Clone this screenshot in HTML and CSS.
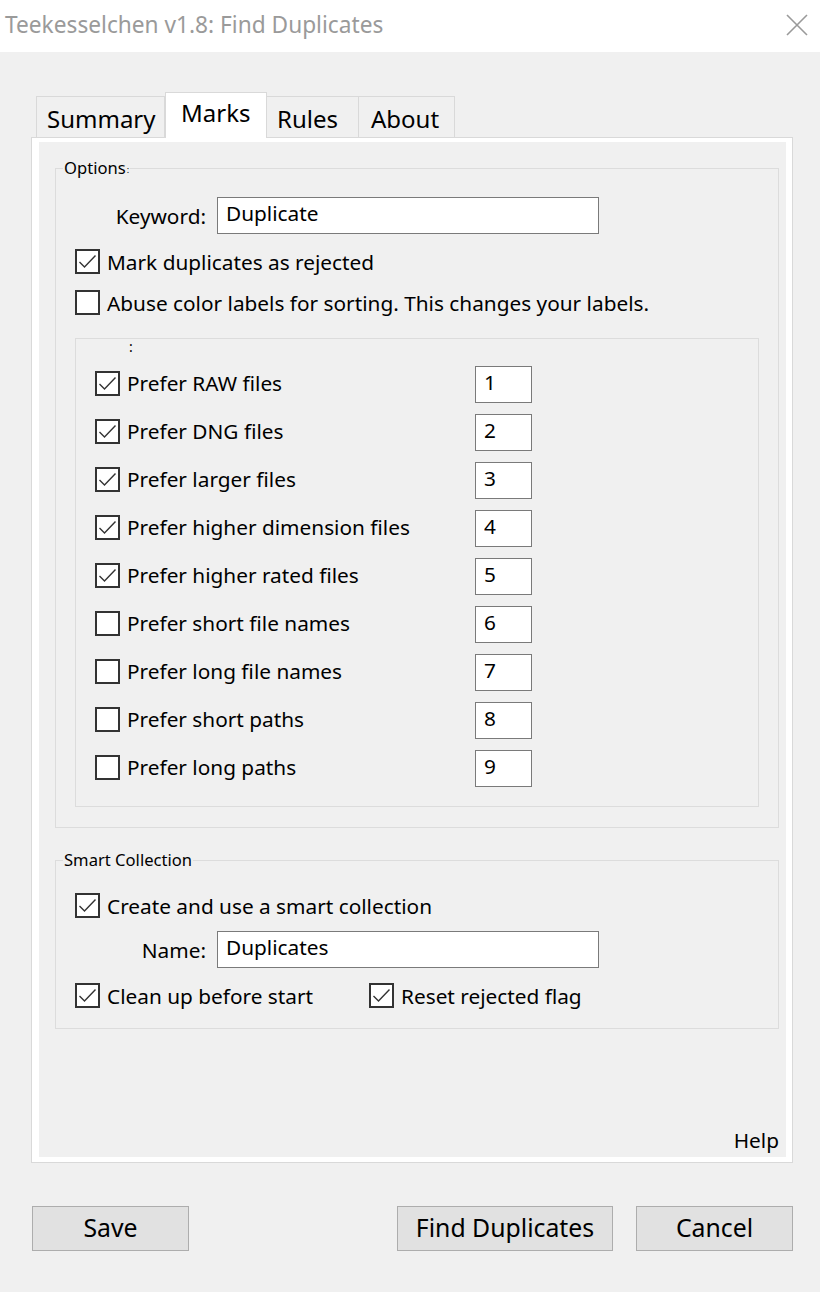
FILE: index.html
```html
<!DOCTYPE html>
<html lang="en">
<head>
    <meta charset="UTF-8">
    <meta name="viewport" content="width=device-width, initial-scale=1.0">
    <title>Teekesselchen v1.8: Find Duplicates</title>
    <link rel="stylesheet" href="styles.css">
</head>
<body>
    <div class="titlebar">
        <span class="title">Teekesselchen v1.8: Find Duplicates</span>
        <svg class="close" width="22" height="22" viewBox="0 0 22 22">
            <path d="M1 1 L21 21 M21 1 L1 21" stroke="#9a9a9a" stroke-width="1.6" fill="none"/>
        </svg>
    </div>

    <div class="client">
        <div class="tabs">
            <div class="tab tab-summary">Summary</div>
            <div class="tab tab-marks active">Marks</div>
            <div class="tab tab-rules">Rules</div>
            <div class="tab tab-about">About</div>
        </div>

        <div class="panel">
            <div class="page">
                <div class="group options">
                    <span class="group-title">Options<span class="dots">:</span></span>

                    <div class="field-row">
                        <label class="field-label">Keyword:</label>
                        <input class="text-input" type="text" value="Duplicate">
                    </div>
                    <div class="check-row first">
                        <span class="check on"></span>
                        <span>Mark duplicates as rejected</span>
                    </div>
                    <div class="check-row">
                        <span class="check"></span>
                        <span>Abuse color labels for sorting. This changes your labels.</span>
                    </div>

                    <div class="group rules">
                        <span class="group-title small">:</span>
                        <div class="rule-row">
                            <div class="rule-check"><span class="check on"></span><span>Prefer RAW files</span></div>
                            <input class="num-input" type="text" value="1">
                        </div>
                        <div class="rule-row">
                            <div class="rule-check"><span class="check on"></span><span>Prefer DNG files</span></div>
                            <input class="num-input" type="text" value="2">
                        </div>
                        <div class="rule-row">
                            <div class="rule-check"><span class="check on"></span><span>Prefer larger files</span></div>
                            <input class="num-input" type="text" value="3">
                        </div>
                        <div class="rule-row">
                            <div class="rule-check"><span class="check on"></span><span>Prefer higher dimension files</span></div>
                            <input class="num-input" type="text" value="4">
                        </div>
                        <div class="rule-row">
                            <div class="rule-check"><span class="check on"></span><span>Prefer higher rated files</span></div>
                            <input class="num-input" type="text" value="5">
                        </div>
                        <div class="rule-row">
                            <div class="rule-check"><span class="check"></span><span>Prefer short file names</span></div>
                            <input class="num-input" type="text" value="6">
                        </div>
                        <div class="rule-row">
                            <div class="rule-check"><span class="check"></span><span>Prefer long file names</span></div>
                            <input class="num-input" type="text" value="7">
                        </div>
                        <div class="rule-row">
                            <div class="rule-check"><span class="check"></span><span>Prefer short paths</span></div>
                            <input class="num-input" type="text" value="8">
                        </div>
                        <div class="rule-row">
                            <div class="rule-check"><span class="check"></span><span>Prefer long paths</span></div>
                            <input class="num-input" type="text" value="9">
                        </div>
                    </div>
                </div>

                <div class="group collection">
                    <span class="group-title">Smart Collection</span>
                    <div class="check-row">
                        <span class="check on"></span>
                        <span>Create and use a smart collection</span>
                    </div>
                    <div class="field-row name-row">
                        <label class="field-label">Name:</label>
                        <input class="text-input" type="text" value="Duplicates">
                    </div>
                    <div class="check-row pair">
                        <div class="pair-left"><span class="check on"></span><span>Clean up before start</span></div>
                        <div><span class="check on"></span><span>Reset rejected flag</span></div>
                    </div>
                </div>

                <div class="help">Help</div>
            </div>
        </div>

        <div class="buttons">
            <button class="btn btn-save">Save</button>
            <button class="btn btn-find">Find Duplicates</button>
            <button class="btn btn-cancel">Cancel</button>
        </div>
    </div>
</body>
</html>
```

FILE: styles.css
```css
body {
    margin: 0;
    font-family: "Noto Sans", "Open Sans", sans-serif;
    color: #000;
    background-color: #f0f0f0;
}
.titlebar {
    height: 52px;
    background-color: #fff;
    display: flex;
    align-items: center;
    justify-content: space-between;
    padding: 0 12px 4px 5px;
    box-sizing: border-box;
}
.title {
    font-size: 22.7px;
    color: #9a9a9a;
}
.close {
    margin-top: 2px;
}
.client {
    padding-top: 40px;
    height: 1240px;
    box-sizing: border-box;
}

/* tabs */
.tabs {
    display: flex;
    align-items: flex-end;
    margin-left: 36px;
    height: 46px;
}
.tab {
    height: 42px;
    box-sizing: border-box;
    border: 1px solid #d9d9d9;
    border-bottom: none;
    font-size: 24px;
    display: flex;
    align-items: center;
    padding: 2px 0 0 10px;
}
.tab + .tab {
    border-left: none;
}
.tab-summary { width: 129px; }
.tab-marks { width: 102px; padding-left: 15px; }
.tab-rules { width: 92px; }
.tab-about { width: 96px; padding-left: 12px; }
.tab.active {
    height: 46px;
    background-color: #fff;
    border-left: 1px solid #d9d9d9;
    position: relative;
    z-index: 1;
    padding-top: 0;
    padding-bottom: 6px;
}
.tab.active + .tab {
    border-left: none;
}

/* tab panel */
.panel {
    margin: -1px 0 0 31px;
    width: 762px;
    height: 1026px;
    box-sizing: border-box;
    border: 1px solid #d9d9d9;
    background-color: #fff;
    padding: 4px 6px 5px 7px;
}
.page {
    height: 100%;
    background-color: #f0f0f0;
    display: flex;
    flex-direction: column;
    padding: 26px 7px 0 16px;
    box-sizing: border-box;
    font-size: 20.8px;
}

/* group boxes */
.group {
    position: relative;
    border: 1px solid #dcdcdc;
}
.group-title {
    position: absolute;
    top: -12px;
    left: 7px;
    padding: 0 1px;
    font-size: 16.6px;
    line-height: 22px;
    background-color: #f0f0f0;
}
.group-title .dots {
    font-size: 9px;
    vertical-align: middle;
    margin-left: 1px;
}
.group-title.small {
    left: 52px;
    top: 1px;
    font-size: 14px;
    line-height: 14px;
    background: none;
}
.options {
    padding: 28px 19px 20px 19px;
}
.collection {
    margin-top: 32px;
    padding: 24px 19px 12px 19px;
}

.field-row {
    display: flex;
    align-items: center;
    height: 37px;
}
.field-label {
    width: 131px;
    margin-right: 11px;
    text-align: right;
}
.text-input {
    width: 382px;
    height: 37px;
    box-sizing: border-box;
    border: 1px solid #7a7a7a;
    background-color: #fff;
    font-family: inherit;
    font-size: 20.8px;
    padding: 0 8px 5px 8px;
    outline: none;
}
.check-row {
    display: flex;
    align-items: center;
    height: 41px;
}
.check-row.first {
    margin-top: 7px;
}
.name-row {
    margin-top: 5px;
}
.check-row.pair {
    margin-top: 7px;
}
.check-row.pair div {
    display: flex;
    align-items: center;
}
.pair-left {
    width: 294px;
}

/* checkbox */
.check {
    width: 25px;
    height: 25px;
    box-sizing: border-box;
    border: 2px solid #333;
    background-color: #fff;
    margin-right: 7px;
    flex-shrink: 0;
}
.check.on {
    background-image: url("data:image/svg+xml,%3Csvg xmlns='http://www.w3.org/2000/svg' viewBox='0 0 21 21'%3E%3Cpath d='M2.5 11 L7.5 16 L18.5 4.5' stroke='%23333' stroke-width='1.4' fill='none'/%3E%3C/svg%3E");
    background-size: 100% 100%;
}

/* priority rules */
.rules {
    margin-top: 15px;
    padding: 20px 19px 15px 19px;
}
.rule-row {
    display: flex;
    align-items: center;
    height: 48px;
}
.rule-check {
    width: 380px;
    display: flex;
    align-items: center;
}
.num-input {
    width: 57px;
    height: 37px;
    box-sizing: border-box;
    border: 1px solid #7a7a7a;
    background-color: #fff;
    font-family: inherit;
    font-size: 20.8px;
    padding: 0 8px 5px 8px;
    margin-top: 3px;
    outline: none;
}

.help {
    margin-top: auto;
    align-self: flex-end;
    padding-bottom: 3px;
}

/* dialog buttons */
.buttons {
    display: flex;
    margin: 43px 0 0 32px;
    width: 761px;
}
.btn {
    height: 45px;
    border: 1px solid #adadad;
    background-color: #e1e1e1;
    font-family: inherit;
    font-size: 24.8px;
    color: #000;
    padding: 0 0 3px 0;
}
.btn-save {
    width: 157px;
    margin-right: auto;
}
.btn-find {
    width: 216px;
    margin-right: 23px;
}
.btn-cancel {
    width: 157px;
}
```
